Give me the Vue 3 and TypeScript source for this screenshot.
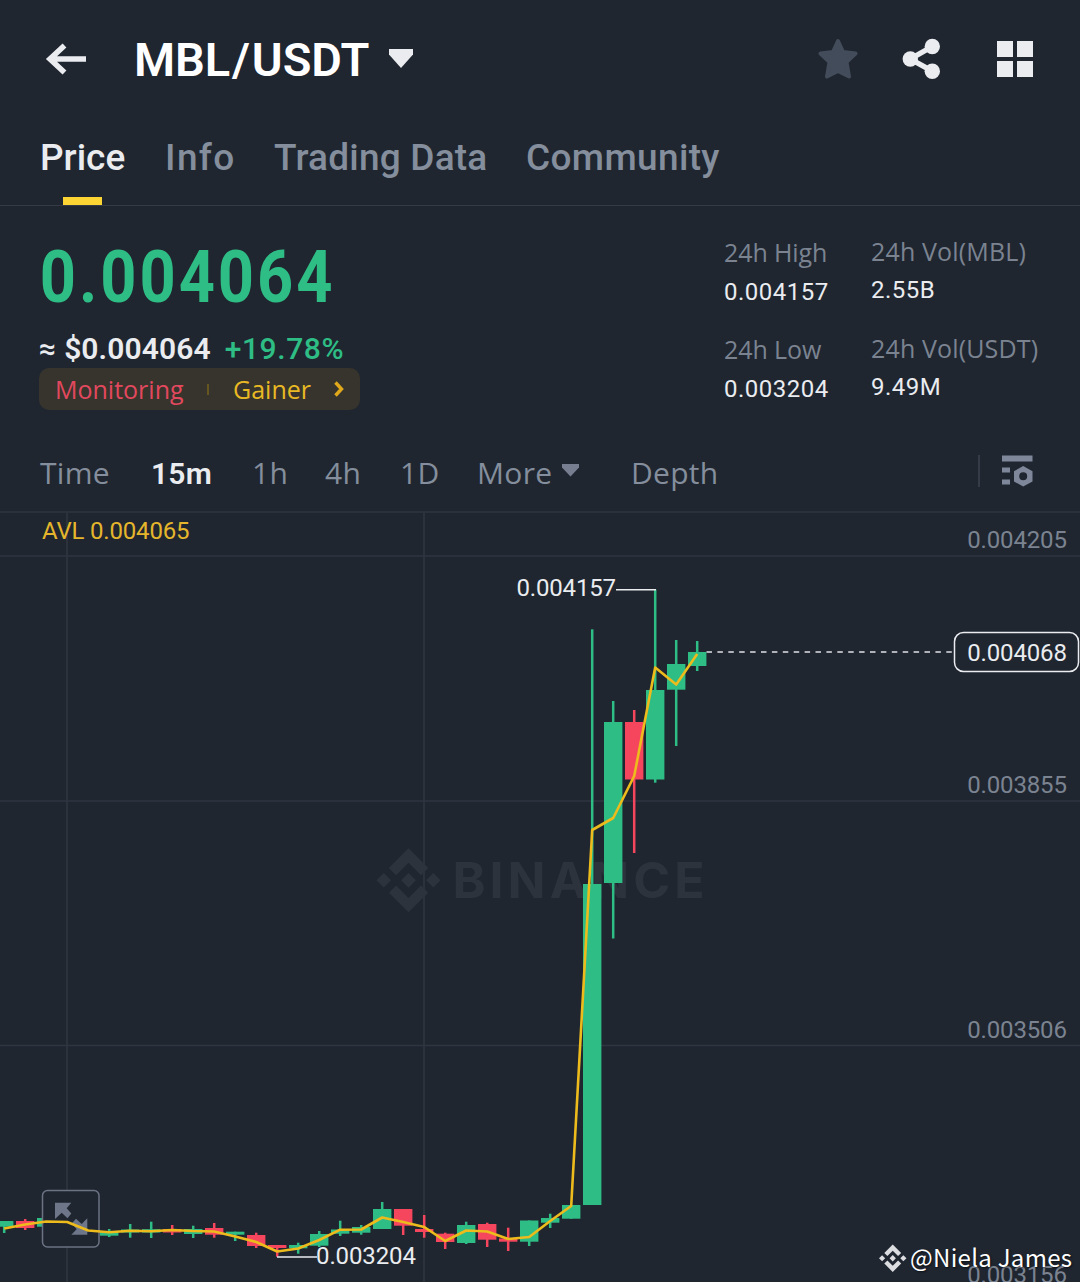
<script setup lang="ts">
interface Candle { x: number; high: number; top: number; bottom: number; low: number; up: boolean }

const tabs = [
  { name: 'Price', ls: 0 },
  { name: 'Info', ls: 1.4 },
  { name: 'Trading Data', ls: 0.2 },
  { name: 'Community', ls: 0.35 }
]

const stats = [
  [
    { label: '24h High', value: '0.004157' },
    { label: '24h Low', value: '0.003204' }
  ],
  [
    { label: '24h Vol(MBL)', value: '2.55B' },
    { label: '24h Vol(USDT)', value: '9.49M' }
  ]
]

const intervals = ['Time', '15m', '1h', '4h', '1D', 'More', 'Depth']

// high, body top, body bottom, low, direction
const rows: [number, number, number, number, number][] = [
  [1221, 1221, 1226.7, 1233, 1],
  [1219, 1221, 1228, 1230, 0],
  [1218, 1218, 1226.7, 1226.7, 1],
  [1221, 1222, 1225, 1226, 0],
  [1228, 1229, 1232, 1233, 0],
  [1229, 1231.5, 1235.7, 1237, 1],
  [1224, 1229.5, 1232.5, 1237.7, 1],
  [1221.7, 1229.2, 1232.5, 1238, 1],
  [1225, 1229, 1232.5, 1235, 0],
  [1225.7, 1229, 1234, 1238, 1],
  [1223, 1228, 1234.7, 1237.7, 0],
  [1231.7, 1231.7, 1234.7, 1241, 1],
  [1232.7, 1235, 1246, 1248, 0],
  [1245, 1245, 1248, 1256.7, 0],
  [1242.7, 1245, 1248.3, 1253.7, 1],
  [1231, 1234, 1245.7, 1247, 1],
  [1220.7, 1229.5, 1233.7, 1236, 1],
  [1225, 1227, 1232.7, 1234.7, 1],
  [1202, 1209, 1229, 1229, 1],
  [1209, 1209, 1225.7, 1235, 0],
  [1215, 1229, 1232, 1237.7, 0],
  [1232.7, 1233.7, 1242, 1249, 0],
  [1221.7, 1225, 1243, 1244, 1],
  [1222.7, 1224, 1239.7, 1247, 0],
  [1227.7, 1238.5, 1241.7, 1251, 0],
  [1220.5, 1220.5, 1241.7, 1246, 1],
  [1213.7, 1218, 1222.7, 1228, 1],
  [1205, 1205, 1218.7, 1218.7, 1],
  [629.3, 884, 1205, 1205, 1],
  [701, 722, 883, 938.5, 1],
  [710, 722, 779.5, 853, 0],
  [589.5, 690, 779.5, 782.7, 1],
  [640, 664, 689.7, 746, 1],
  [641, 652, 666, 671, 1]
]
const centre = (i: number) => 4.2 + i * 21
const candles: Candle[] = rows.map((r, i) => ({
  x: centre(i), high: r[0], top: r[1], bottom: r[2], low: r[3], up: r[4] === 1
}))

const average = [
  1228.5, 1224.5, 1221.5, 1222, 1230.5, 1232.3, 1230.8, 1231.3, 1230, 1231, 1231.5, 1236.5,
  1242, 1251.5, 1248.5, 1240, 1229.7, 1229.5, 1217.5, 1222, 1227, 1241, 1230.5, 1231.5,
  1239, 1237, 1221, 1206, 830, 818, 776, 667.5, 684.5, 654
]
const averageLine = average.map((y, i) => `${centre(i)},${y}`).join(' ')

const gridY = [556, 801, 1045.5]
const gridX = [67, 424]
const axis = [
  { text: '0.004205', y: 548 },
  { text: '0.003855', y: 793 },
  { text: '0.003506', y: 1038 },
  { text: '0.003156', y: 1283 }
]
const logo =
  'M38.73 53.2L63.31 28.62 87.9 53.22 102.2 38.92 63.31 0 24.43 38.9zM0 63.31L14.3 49.01 28.6 63.31 14.3 77.61zM38.73 73.41L63.31 98 87.9 73.4 102.21 87.69 63.31 126.61 24.43 87.74zM98 63.31L112.3 49.01 126.6 63.31 112.3 77.61zM77.83 63.3L63.31 48.78 48.78 63.3 63.31 77.83z'
</script>

<template>
  <main class="screen">
    <header class="header">
      <svg class="back" width="42" height="34" viewBox="0 0 42 34">
        <path d="M20.500 3.500L6 17L20.500 30.500M5.500 17H42" fill="none" stroke="#eaecef" stroke-width="5.600" />
      </svg>
      <h1 class="pair">MBL<span class="slash">/</span>USDT</h1>
      <svg class="pair-caret" width="24" height="19" viewBox="0 0 24 19">
        <path d="M0 0H24V5.500L12 19L0 5.500Z" fill="#eaecef" />
      </svg>
      <div class="actions">
        <svg width="40" height="42" viewBox="0 0 40 42">
          <path d="M20 3L25 14L37.500 15.500L28.500 24L31 38.500L20 33L9 38.500L11.500 24L2.500 15.500L15 14Z" fill="#434c5a" stroke="#434c5a" stroke-width="4" stroke-linejoin="round" />
        </svg>
        <svg width="40" height="42" viewBox="0 0 40 42">
          <path d="M30.300 8.500L8.300 21L30.300 33.200" fill="none" stroke="#eaecef" stroke-width="5.400" />
          <circle cx="8.300" cy="21" r="7.700" fill="#eaecef" />
          <circle cx="30.300" cy="8.500" r="7.700" fill="#eaecef" />
          <circle cx="30.300" cy="33.200" r="7.700" fill="#eaecef" />
        </svg>
        <svg width="36" height="36" viewBox="0 0 36 36">
          <path d="M0 0H16V16H0ZM20 0H36V16H20ZM0 20H16V36H0ZM20 20H36V36H20Z" fill="#eaecef" />
        </svg>
      </div>
    </header>

    <nav class="tabs">
      <span v-for="(t, i) in tabs" :key="t.name" class="tab" :class="{ active: i === 0 }" :style="{ letterSpacing: t.ls + 'px' }">{{ t.name }}</span>
    </nav>

    <section class="summary">
      <div class="quote">
        <div class="last">0.004064</div>
        <div class="fiat">
          <span class="approx">≈</span>
          <span class="usd">$0.004064</span>
          <span class="change">+19.78%</span>
        </div>
        <div class="badge">
          <span class="monitoring">Monitoring</span>
          <i class="badge-rule"></i>
          <span class="gainer">Gainer</span>
          <svg class="chevron" width="10" height="16" viewBox="0 0 10 16">
            <path d="M1.500 1.500L7.500 8L1.500 14.500" fill="none" stroke="#e0a91b" stroke-width="3.400" />
          </svg>
        </div>
      </div>
      <dl v-for="(col, c) in stats" :key="c" class="stats" :class="'stats-' + c">
        <div v-for="s in col" :key="s.label" class="stat">
          <dt>{{ s.label }}</dt>
          <dd>{{ s.value }}</dd>
        </div>
      </dl>
    </section>

    <nav class="intervals">
      <div class="interval-list">
        <span v-for="n in intervals" :key="n" class="interval" :class="{ on: n === '15m' }">
          {{ n }}<svg v-if="n === 'More'" class="more-caret" width="17" height="13" viewBox="0 0 17 13">
            <path d="M0 0H17V3.500L8.500 12.500L0 3.500Z" fill="#767e90" />
          </svg>
        </span>
      </div>
      <i class="tools-rule"></i>
      <svg class="tools" width="31" height="32" viewBox="0 0 31 32">
        <path d="M0 0.500H30.500V6.500H0ZM0 12.500H8V17.500H0ZM0 24.500H8V29.500H0Z" fill="#7f879b" />
        <path d="M21.200 11L30.500 16.200V26.400L21.200 31.600L12 26.400V16.200ZM21.200 17.300A4 4 0 1 0 21.200 25.300A4 4 0 1 0 21.200 17.300Z" fill="#7f879b" fill-rule="evenodd" />
      </svg>
    </nav>

    <section class="chart">
      <svg width="1080" height="769" viewBox="0 513 1080 769">
        <line v-for="y in gridY" :key="'h' + y" x1="0" x2="1080" :y1="y" :y2="y" class="grid" />
        <line v-for="x in gridX" :key="'v' + x" :x1="x" :x2="x" y1="513" y2="1282" class="grid" />

        <g fill="#2d333d">
          <path :d="logo" transform="translate(376.500 848.300) scale(0.506)" />
          <text x="452.500" y="898" class="brand" textLength="252">BINANCE</text>
        </g>

        <text v-for="a in axis" :key="a.text" x="967.300" :y="a.y" class="num muted" textLength="99.600">{{ a.text }}</text>

        <g v-for="c in candles" :key="c.x" :fill="c.up ? '#2ebd85' : '#f6465d'">
          <rect :x="c.x - 1.25" :y="c.high" width="2.500" :height="c.low - c.high" />
          <rect :x="c.x - 9.2" :y="c.top" width="18.400" :height="c.bottom - c.top" />
        </g>

        <rect x="42.500" y="1190.500" width="56.500" height="56.500" rx="5" fill="#1f2630" stroke="#6b7384" stroke-width="1.500" />
        <path d="M55 1202.700H71.300L66.700 1208.300L71.300 1213.500L67.500 1218.300L61.700 1212.700L55 1219Z M87.300 1218.300V1234.700H71.300L76.700 1229.300L71.700 1223.500L76 1218.700L81.700 1224Z" fill="#6e7789" />

        <polyline :points="averageLine" fill="none" stroke="#edbb1c" stroke-width="2.600" stroke-linejoin="round" />

        <path d="M616 589.800H656M277 1257H317" stroke="#eaecef" stroke-width="1.600" />
        <text x="516.500" y="596" class="num light" textLength="99.500">0.004157</text>
        <text x="316" y="1264" class="num light" textLength="100">0.003204</text>

        <line x1="706.500" x2="954" y1="652" y2="652" stroke="#dfe1e6" stroke-width="1.600" stroke-dasharray="5.500 5.400" />
        <rect x="954.500" y="632.500" width="124" height="39" rx="9" fill="#1f2630" stroke="#eaecef" stroke-width="1.500" />
        <text x="967.300" y="661" class="num light" textLength="99.600">0.004068</text>

        <text x="42" y="539" class="num gold" textLength="147.500">AVL 0.004065</text>

        <path :d="logo" transform="translate(879 1244.500) scale(0.217)" fill="#dcdde0" />
        <text x="910" y="1267" class="author" textLength="162">@Niela James</text>
      </svg>
    </section>
  </main>
</template>

<style>
body { background: #1f2630; }
</style>

<style scoped>
.screen {
  width: 1080px;
  height: 1282px;
  overflow: hidden;
  background: #1f2630;
  color: #eaecef;
  font-family: Roboto, "Liberation Sans", sans-serif;
  display: flex;
  flex-direction: column;
}
.header {
  height: 118px;
  display: flex;
  align-items: center;
  padding: 0 47.500px 0 44px;
  box-sizing: border-box;
}
.pair {
  margin: 2px 0 0 48px;
  font-size: 47px;
  line-height: 50px;
  font-weight: 600;
  letter-spacing: -0.1px;
  color: #fff;
}
.slash { margin: 0 2px; }
.pair-caret { margin: 0 0 2px 20px; }
.actions {
  margin-left: auto;
  display: flex;
  align-items: center;
}
.actions svg:nth-child(2) { margin-left: 44px; }
.actions svg:nth-child(3) { margin-left: 55px; }

.tabs {
  height: 88px;
  box-sizing: border-box;
  border-bottom: 1px solid #343b45;
  padding-left: 40px;
  display: grid;
  grid-template-columns: 125px 109px 252px auto;
}
.tab {
  position: relative;
  justify-self: start;
  font-size: 37px;
  line-height: 79px;
  font-weight: 500;
  color: #848e9c;
}
.tab.active { color: #eaecef; }
.tab.active::after {
  content: "";
  position: absolute;
  left: 23px;
  bottom: 0;
  width: 39px;
  height: 8px;
  background: #fcd535;
}

.summary {
  height: 230px;
  display: flex;
}
.quote {
  width: 724px;
  box-sizing: border-box;
  padding: 34px 0 0 39px;
}
.last {
  padding-left: 1px;
  font-size: 73px;
  line-height: 74px;
  font-weight: 700;
  letter-spacing: 3.4px;
  transform: scaleX(0.865);
  transform-origin: left center;
  color: #2ebd85;
}
.fiat {
  margin-top: 17px;
  display: flex;
  font-size: 30px;
  line-height: 35px;
  font-weight: 500;
}
.usd { margin-left: 8px; font-weight: 600; letter-spacing: 0.1px; }
.change { margin-left: 14px; letter-spacing: 0.6px; color: #2ebd85; }
.badge {
  margin-top: 2px;
  width: 321px;
  height: 42px;
  box-sizing: border-box;
  padding: 0 16px 0 16px;
  display: flex;
  align-items: center;
  border-radius: 10px;
  background: #36342d;
  font-family: "Open Sans", "Liberation Sans", sans-serif;
  font-size: 25px;
  line-height: 42px;
}
.monitoring { width: 129px; color: #e2485e; }
.badge-rule { width: 2px; height: 11px; margin-left: 23px; background: #65551f; }
.gainer { margin-left: 24px; color: #e9b924; }
.chevron { margin-left: auto; }

.stats { margin: 0; padding-top: 31px; }
.stats-0 { width: 147px; }
.stats-1 { padding-top: 30px; }
.stat { height: 97px; }
.stat dt {
  height: 40px;
  font-family: "Open Sans", "Liberation Sans", sans-serif;
  font-size: 25px;
  line-height: 30px;
  letter-spacing: -0.1px;
  color: #7b8391;
}
.stats-1 .stat dt { height: 39px; letter-spacing: 0.15px; }
.stat dd {
  margin: 0;
  font-size: 24px;
  line-height: 30px;
  letter-spacing: 0.5px;
}

.intervals {
  height: 77px;
  box-sizing: border-box;
  border-bottom: 2px solid #2a313b;
  padding: 0 47px 0 40px;
  display: flex;
  align-items: center;
}
.interval-list {
  flex: 1;
  display: grid;
  grid-template-columns: 111px 101px 73px 75px 77px 154px auto;
}
.interval {
  font-family: "Open Sans", "Liberation Sans", sans-serif;
  font-size: 30px;
  line-height: 73px;
  letter-spacing: 0.3px;
  color: #848e9c;
  white-space: nowrap;
}
.interval.on {
  font-family: Roboto, "Liberation Sans", sans-serif;
  font-weight: 600;
  line-height: 75px;
  letter-spacing: 0.2px;
  color: #eaecef;
}
.more-caret { margin-left: 10px; vertical-align: 7px; }
.tools-rule { width: 2px; height: 32px; background: #353c47; margin: 0 22px 5px 0; }
.tools { margin-bottom: 5px; }

.chart { height: 769px; }
.chart svg { display: block; }
.grid { stroke: #2f3640; stroke-width: 1.600; }
.num { font-size: 24px; }
.muted { fill: #7b8391; }
.light { fill: #eaecef; }
.gold { fill: #e5b62c; }
.brand {
  font-family: Inter, "Liberation Sans", sans-serif;
  font-size: 50px;
  font-weight: 700;
}
.author {
  font-family: "Noto Sans CJK SC", "Noto Sans", sans-serif;
  font-size: 24px;
  font-weight: 400;
  fill: #fff;
  text-shadow: 1px 1px 2px rgba(0, 0, 0, 0.6);
}
</style>
